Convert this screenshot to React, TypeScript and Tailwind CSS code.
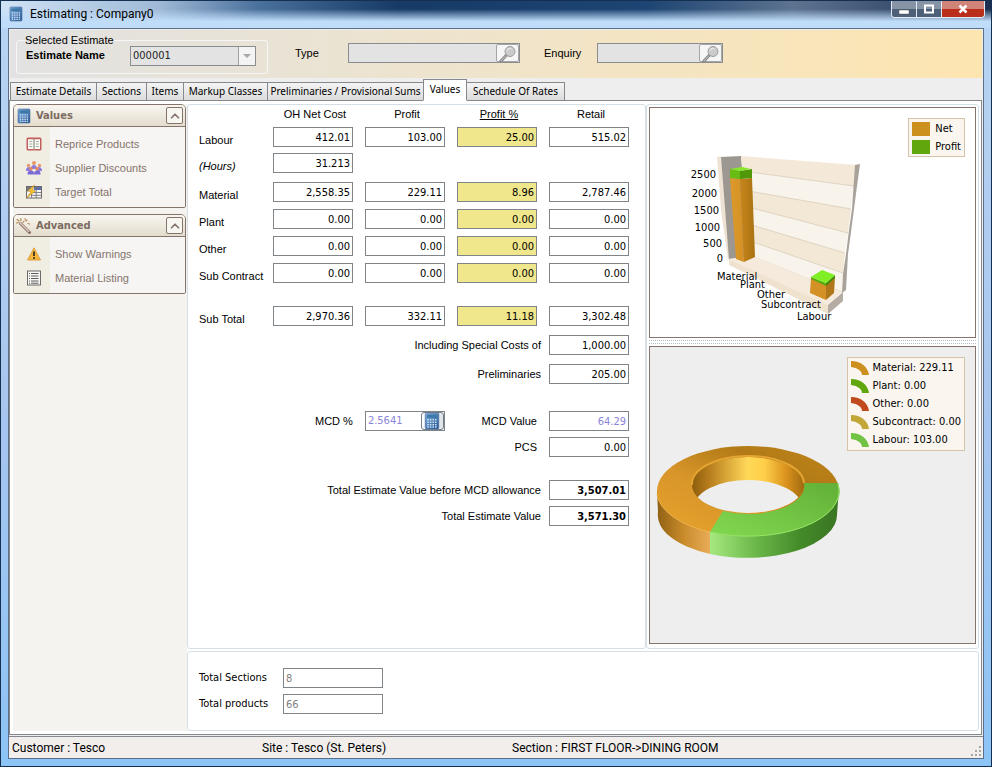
import React, { useState } from 'react';
import { ChevronUp } from 'lucide-react';

const UI_FONT = "font-['DejaVu_Sans_Condensed','Noto_Sans',sans-serif]";
const TAB_FONT = "font-['Noto_Sans',sans-serif]";
const FORM_FONT = "font-['Liberation_Sans',sans-serif]";
const TITLE_FONT = "font-['Roboto',sans-serif]";

interface ValueRow {
  label: string;
  height: string;
  italic?: boolean;
  cells: string[];
}

const COLUMNS = ['OH Net Cost', 'Profit', 'Profit %', 'Retail'];

const ROWS: ValueRow[] = [
  { label: 'Labour', height: 'h-[26px]', cells: ['412.01', '103.00', '25.00', '515.02'] },
  { label: '(Hours)', height: 'h-[29px]', italic: true, cells: ['31.213'] },
  { label: 'Material', height: 'h-[27px]', cells: ['2,558.35', '229.11', '8.96', '2,787.46'] },
  { label: 'Plant', height: 'h-[27px]', cells: ['0.00', '0.00', '0.00', '0.00'] },
  { label: 'Other', height: 'h-[27px]', cells: ['0.00', '0.00', '0.00', '0.00'] },
  { label: 'Sub Contract', height: 'h-[43px]', cells: ['0.00', '0.00', '0.00', '0.00'] },
  { label: 'Sub Total', height: 'h-[29px]', cells: ['2,970.36', '332.11', '11.18', '3,302.48'] },
];

const TABS = [
  { name: 'Estimate Details', width: 'w-[87px]' },
  { name: 'Sections', width: 'w-[51px]' },
  { name: 'Items', width: 'w-[38px]' },
  { name: 'Markup Classes', width: 'w-[85px]' },
  { name: 'Preliminaries / Provisional Sums', width: 'w-[157px]' },
  { name: 'Values', width: 'w-[44px]' },
  { name: 'Schedule Of Rates', width: 'w-[99px]' },
];

/* Icons */

const CalculatorIcon = ({ className = 'h-4 w-4' }: { className?: string }) => (
  <svg viewBox="0 0 16 16" className={className} aria-hidden="true">
    <defs>
      <linearGradient id="calc" x1="0" y1="0" x2="1" y2="1">
        <stop offset="0" stopColor="#7fb0e0" />
        <stop offset="1" stopColor="#23538f" />
      </linearGradient>
    </defs>
    <rect x="2" y="1" width="12" height="14" rx="1" fill="url(#calc)" stroke="#4a6f9f" strokeWidth="0.6" />
    <rect x="3.5" y="2.5" width="9" height="2.5" fill="#3d78a8" />
    <g fill="#d8ecff">
      {[6.3, 8.5, 10.7, 12.7].map((y) =>
        [3.8, 6.1, 8.4, 10.7].map((x) => <rect key={`${x}-${y}`} x={x} y={y} width="1.4" height="1.2" />)
      )}
    </g>
  </svg>
);

const BookIcon = () => (
  <svg viewBox="0 0 16 16" className="h-4 w-4" aria-hidden="true">
    <rect x="0.5" y="1.5" width="15" height="13" rx="1.5" fill="#c0605c" />
    <path d="M2 3.2h5.2l.8.6.8-.6H14v9.800H8.8l-.8.5-.8-.5H2z" fill="#fbfaf5" />
    <path d="M8 3.5v9.5" stroke="#777" strokeWidth="1" />
    <path d="M3.2 5.500h3M3.2 8h3M3.2 10.500h3M9.8 5.500h3M9.8 8h3M9.8 10.500h3" stroke="#9fae9d" strokeWidth="1" />
  </svg>
);

const PeopleIcon = () => (
  <svg viewBox="0 0 16 16" className="h-4 w-4" aria-hidden="true">
    <path d="M5 9c0-3 1-4 3-4s3 1 3 4z" fill="#8f7be0" />
    <circle cx="8" cy="3" r="2" fill="#e79a68" />
    <path d="M0 11c0-3 1-4 3-4s2.500 1 2.500 4z" fill="#8f7be0" />
    <path d="M10.500 11c0-3 1-4 2.500-4s3 1 3 4z" fill="#8f7be0" />
    <circle cx="2.500" cy="5.500" r="1.700" fill="#e79a68" />
    <circle cx="13.500" cy="5.500" r="1.700" fill="#e79a68" />
    <path d="M1.500 14.500c0-3 1-4 3.500-4s3 1 3 4z" fill="#7b6ad6" />
    <path d="M8 14.500c0-3 1-4 3.500-4s3 1 3 4z" fill="#7b6ad6" />
    <circle cx="5" cy="8.800" r="1.800" fill="#e58e58" />
    <circle cx="11" cy="8.800" r="1.800" fill="#e58e58" />
  </svg>
);

const TargetIcon = () => (
  <svg viewBox="0 0 16 16" className="h-4 w-4" aria-hidden="true">
    <rect x="0.500" y="2.500" width="15" height="11.500" fill="#f4f4ee" stroke="#6d6a68" />
    <rect x="8" y="3" width="7" height="3" fill="#5a6fa8" />
    <path d="M6 8.500h9M5 11.300h10M5.500 9v5M10.200 3v11" stroke="#6f7683" strokeWidth="0.900" />
    <path d="M1 3h5L1 8z" fill="#7b7873" />
    <path d="M8.500 1L2 7l3 .8L.5 14 9.500 7 6.500 6z" fill="#f8c22c" stroke="#b8801c" strokeWidth="0.500" />
  </svg>
);

const WandIcon = () => (
  <svg viewBox="0 0 16 16" className="h-4 w-4" aria-hidden="true">
    <path d="M4.500 5.500l9 9" stroke="#8b6f63" strokeWidth="3" strokeLinecap="round" />
    <path d="M4.200 5l8.500 8.500" stroke="#dfd0c5" strokeWidth="1.200" strokeLinecap="round" />
    <path d="M1 1.500l2 1.500M0.500 5l2-.5M5 0.500L4.800 3M8 3l-1 1.500M11 2l-1 1M12 5.500l1.500.5M9 .8l.5 1" stroke="#b5854e" strokeWidth="1.100" strokeLinecap="round" />
  </svg>
);

const WarningIcon = () => (
  <svg viewBox="0 0 16 16" className="h-4 w-4" aria-hidden="true">
    <path d="M8 1.800l6.500 12.200H1.500z" fill="#f6b53c" stroke="#dda046" strokeLinejoin="round" />
    <path d="M8 5.500v4.500M8 11.300v1.600" stroke="#3c2f1b" strokeWidth="1.800" />
  </svg>
);

const ListIcon = () => (
  <svg viewBox="0 0 16 16" className="h-4 w-4" aria-hidden="true">
    <rect x="1.500" y="1" width="13" height="14" fill="#f7f7f3" stroke="#6b6b6b" />
    <path d="M5 3.500h7.500M5 6h7.500M5 8.500h7.500M5 11h7.500M5 13.200h7.500" stroke="#5e5e5e" strokeWidth="1" />
    <path d="M3 3.500h1M3 6h1M3 8.500h1M3 11h1M3 13.200h1" stroke="#5e5e5e" strokeWidth="1" />
  </svg>
);

const LookupIcon = () => (
  <svg viewBox="0 0 22 18" className="h-[18px] w-[22px]" aria-hidden="true">
    <path d="M9.500 10L4 16" stroke="#8d8d8d" strokeWidth="3" strokeLinecap="round" />
    <path d="M9 10.500L4 16" stroke="#c4c4c4" strokeWidth="1" />
    <circle cx="13" cy="6.500" r="5" fill="#cbcbcb" stroke="#9b9b9b" />
    <path d="M10 5.500c.8-2 3-2.500 4.500-1.800" stroke="#e6e6e6" strokeWidth="1.200" fill="none" />
  </svg>
);

/* Form pieces */

interface ValueBoxProps {
  id?: string;
  label?: string;
  value: string;
  tone?: string;
}

const ValueBox: React.FC<ValueBoxProps> = ({ id, label, value, tone = 'bg-white text-black' }) => (
  <input
    id={id}
    aria-label={label}
    defaultValue={value}
    className={`block h-5 w-20 border border-[#7f8488] px-[2px] text-right text-[11px] leading-4 outline-none ${UI_FONT} ${tone}`}
  />
);

const LookupField = ({ id, label, width }: { id: string; label: string; width: string }) => (
  <div className="flex items-center">
    <label htmlFor={id} className="w-[53px]">{label}</label>
    <div className={`flex h-5 border border-[#8a8d90] bg-[#e3e3e3] ${width}`}>
      <input id={id} className="min-w-0 flex-1 bg-transparent px-1 outline-none" />
      <button aria-label={`Find ${label}`} className="h-[18px] w-[23px] rounded-[2px] border border-[#a5a5a5] bg-[#f6f6f6]">
        <LookupIcon />
      </button>
    </div>
  </div>
);

interface TotalLineProps {
  id: string;
  label: string;
  value: string;
  inset?: string;
  tone?: string;
}

const TotalLine: React.FC<TotalLineProps> = ({ id, label, value, inset = 'mr-2', tone }) => (
  <div className="flex items-center justify-end">
    <label htmlFor={id} className={inset}>{label}</label>
    <ValueBox id={id} value={value} tone={tone} />
  </div>
);

/* Side panel */

interface SideGroupProps {
  title: string;
  icon: React.ReactNode;
  items: { name: string; icon: React.ReactNode }[];
}

const SideGroup: React.FC<SideGroupProps> = ({ title, icon, items }) => {
  const [open, setOpen] = useState(true);

  return (
    <section className="overflow-hidden rounded-t-[5px] rounded-b-[2px] border border-[#85746b] bg-[#f6f5f3] text-[#85746b]">
      <header className="flex h-[22px] items-center border-b border-[#85746b] bg-linear-to-b from-[#f8f6f0] to-[#e3ddcd] pr-[2px] pl-[2px]">
        {icon}
        <h2 className={`flex-1 pt-px pl-1 text-[11px] font-bold text-[#7d6b60] ${UI_FONT}`}>{title}</h2>
        <button
          aria-label={`Toggle ${title}`}
          onClick={() => setOpen(!open)}
          className="flex h-[17px] w-[17px] items-center justify-center rounded-[2px] border border-[#85746b] bg-[#f8f6f1]"
        >
          <ChevronUp className="h-[14px] w-[14px] shrink-0" strokeWidth={3} />
        </button>
      </header>
      {open && (
        <ul className="bg-linear-to-r from-[#f0ede3] from-[36px] to-[#f6f5f3] to-[36px] pt-[5px] pb-[3px]">
          {items.map((item) => (
            <li key={item.name}>
              <button className="flex h-6 w-full items-center gap-[13px] pl-3 text-left text-[11px]">
                {item.icon}
                {item.name}
              </button>
            </li>
          ))}
        </ul>
      )}
    </section>
  );
};

/* Charts */

const AXIS_TICKS = [
  { text: '2500', x: 716, y: 178 },
  { text: '2000', x: 717, y: 197 },
  { text: '1500', x: 719, y: 214 },
  { text: '1000', x: 720, y: 231 },
  { text: '500', x: 722, y: 247 },
  { text: '0', x: 723, y: 262 },
];

const AXIS_NAMES = [
  { text: 'Material', x: 717, y: 280 },
  { text: 'Plant', x: 740, y: 288 },
  { text: 'Other', x: 757, y: 298 },
  { text: 'Subcontract', x: 761, y: 308 },
  { text: 'Labour', x: 797, y: 320 },
];

const BarChart = () => (
  <svg viewBox="650 109 220 226" className="h-[226px] w-[220px] shrink-0" role="img" aria-label="Net and profit by type">
    <defs>
      <linearGradient id="netFront" x1="0" y1="0" x2="1" y2="0">
        <stop offset="0" stopColor="#dc9a2c" />
        <stop offset="1" stopColor="#d49024" />
      </linearGradient>
      <linearGradient id="netSide" x1="0" y1="0" x2="1" y2="0">
        <stop offset="0" stopColor="#c8861c" />
        <stop offset="1" stopColor="#a87212" />
      </linearGradient>
    </defs>
    {/* walls */}
    <path d="M717 157l4-1 9 103-2 1-7-50z" fill="#eee3d2" />
    <path d="M721 157l20-1 12 100-24 3z" fill="#9d9791" />
    <path d="M741 156l116 9-3 21-112-15z" fill="#f4e9d8" />
    <path d="M742 171l112 15-3 23-108-19z" fill="#f8f4eb" />
    <path d="M743 190l108 19-3 24-104-27z" fill="#f3e8d6" />
    <path d="M744 206l104 27-3 20-100-30z" fill="#f8f4eb" />
    <path d="M745 223l100 30-2 20-96-33z" fill="#f3e8d6" />
    <path d="M747 240l96 33-1 20-93-38z" fill="#f8f4eb" />
    <path d="M742 171l112 15M743 190l108 19M744 206l104 27M745 223l100 30M747 240l96 33M754 257l50 20 38 15" stroke="#d8ccb9" fill="none" strokeWidth="0.800" />
    <path d="M855 165l5-1-3 22-3 23-3 23-3 22-2 36-4 3 1-19 3-20 3-24 3-21z" fill="#a9a29b" />
    {/* floor */}
    <path d="M729 259l26-2 87 35-14 13z" fill="#f5eadb" />
    <path d="M729 259l99 46v9l-99-49z" fill="#efe2cf" />
    <path d="M828 305l15-13v9l-15 13z" fill="#b5ada4" />
    {/* Material */}
    <path d="M730 178l10 1 4 83-8-3z" fill="url(#netFront)" />
    <path d="M740 179l12-1 3 79-11 5z" fill="url(#netSide)" />
    <path d="M730 169l10 2v8l-10-1z" fill="#68bc14" />
    <path d="M740 171l12-2v9l-12 1z" fill="#51970a" />
    <path d="M730 169l12-2 9 2-11 2z" fill="#86e82a" />
    {/* Labour */}
    <path d="M811 278l15 7v15l-16-7z" fill="#d49126" />
    <path d="M826 285l9-8-1 16-8 7z" fill="#b0771a" />
    <path d="M811 277l15 6v3l-15-7z" fill="#5aaa10" />
    <path d="M826 283l9-8v3l-9 8z" fill="#438806" />
    <path d="M811 277l11-7 13 5-9 8z" fill="#80ef24" />
    <g className={UI_FONT} fontSize="11" fill="#000">
      {AXIS_TICKS.map((t) => (
        <text key={t.text} x={t.x} y={t.y} textAnchor="end">{t.text}</text>
      ))}
      {AXIS_NAMES.map((t) => (
        <text key={t.text} x={t.x} y={t.y}>{t.text}</text>
      ))}
    </g>
  </svg>
);

const DonutChart = () => (
  <svg viewBox="655 442 186 120" className="mt-[89px] ml-1 h-[120px] w-[186px] shrink-0" role="img" aria-label="Profit by type">
    <defs>
      <linearGradient id="goldTop" x1="0" y1="1" x2="1" y2="0">
        <stop offset="0" stopColor="#e9a42c" />
        <stop offset="0.400" stopColor="#d8962a" />
        <stop offset="0.700" stopColor="#b27a16" />
        <stop offset="1" stopColor="#c0861c" />
      </linearGradient>
      <linearGradient id="goldWall" gradientUnits="userSpaceOnUse" x1="692" y1="0" x2="805" y2="0">
        <stop offset="0" stopColor="#8a5c0c" />
        <stop offset="0.150" stopColor="#b57a1c" />
        <stop offset="0.500" stopColor="#ffd858" />
        <stop offset="0.650" stopColor="#ffce48" />
        <stop offset="0.850" stopColor="#d8901c" />
        <stop offset="1" stopColor="#a06a10" />
      </linearGradient>
      <linearGradient id="goldRim" gradientUnits="userSpaceOnUse" x1="658" y1="0" x2="711" y2="0">
        <stop offset="0" stopColor="#8f6114" />
        <stop offset="0.500" stopColor="#c98b2a" />
        <stop offset="1" stopColor="#e8ac58" />
      </linearGradient>
      <linearGradient id="greenTop" x1="0" y1="1" x2="1" y2="0">
        <stop offset="0" stopColor="#82d850" />
        <stop offset="1" stopColor="#62b038" />
      </linearGradient>
      <linearGradient id="greenRim" gradientUnits="userSpaceOnUse" x1="711" y1="0" x2="840" y2="0">
        <stop offset="0" stopColor="#a6e880" />
        <stop offset="0.350" stopColor="#6cb84a" />
        <stop offset="0.700" stopColor="#438a28" />
        <stop offset="1" stopColor="#3a7424" />
      </linearGradient>
      <clipPath id="hole">
        <ellipse cx="749" cy="485" rx="56" ry="28" />
      </clipPath>
    </defs>
    <path d="M658 490L659 512A90 43 0 0 0 711 554L711 528Z" fill="url(#goldRim)" />
    <path d="M711 528L711 554A90 43 0 0 0 838 514L840 490Z" fill="url(#greenRim)" />
    <ellipse cx="749" cy="491" rx="91" ry="45" fill="url(#goldTop)" />
    <path d="M805 483H839A91 45 0 0 1 711 532L724 511A56 28 0 0 0 805 483Z" fill="url(#greenTop)" />
    <path d="M839 484A91 45 0 0 1 711 532" fill="none" stroke="#97e468" strokeWidth="1" />
    <path d="M658 494A91 45 0 0 0 711 532" fill="none" stroke="#efb44c" strokeWidth="1" />
    <ellipse cx="749" cy="485" rx="56" ry="28" fill="url(#goldWall)" />
    <g clipPath="url(#hole)">
      <ellipse cx="749" cy="507" rx="54" ry="27" fill="#eeeeee" />
    </g>
    <path d="M693 485A56 28 0 0 1 805 483" fill="none" stroke="#e3a432" strokeWidth="2" />
  </svg>
);

const PROFIT_KEYS = [
  { text: 'Material: 229.11', color: '#cc901e' },
  { text: 'Plant: 0.00', color: '#5fa70c' },
  { text: 'Other: 0.00', color: '#c04a1c' },
  { text: 'Subcontract: 0.00', color: '#c2a636' },
  { text: 'Labour: 103.00', color: '#72c344' },
];

const LEGEND = `ml-auto self-start border border-[#d4c3a8] bg-[#faf5ef] text-[11px] text-black whitespace-nowrap ${UI_FONT}`;

const App: React.FC = () => {
  const [activeTab, setActiveTab] = useState('Values');

  return (
    <div className={`flex min-h-screen flex-col border border-[#142f50] bg-linear-to-b from-[#b9d5f4] via-[#a9c6ee] to-[#8cc4f6] px-[7px] pb-[7px] text-[11px] text-black ${FORM_FONT}`}>
      {/* Title bar */}
      <header className="-mx-[7px] flex h-[27px] items-start bg-[linear-gradient(to_bottom,transparent_30%,#bfdcf9_75%),linear-gradient(to_right,#cfe2f5_0%,#9fb9d6_16%,#4a709c_26%,#173a66_40%,#1d4472_65%,#5d7390_80%,#1a2f50_100%)] pl-[7px]">
        <div className="flex h-[26px] items-center gap-[6px]">
          <CalculatorIcon />
          <h1 className={`text-[12px] ${TITLE_FONT}`}>Estimating : Company0</h1>
        </div>
        <div className="mr-[6px] ml-auto flex h-[17px] overflow-hidden rounded-b-[4px] border border-t-0 border-[#e2ebf5]">
          <button aria-label="Minimize" className="flex w-[25px] items-center justify-center border-r border-[#e2ebf5] bg-linear-to-b from-[#8794a6] from-50% to-[#4d6078] to-50%">
            <svg viewBox="0 0 12 10" className="mt-1 h-[10px] w-3"><rect x="1" y="4" width="10" height="4" fill="#fff" stroke="#555" strokeWidth="0.500" /></svg>
          </button>
          <button aria-label="Maximize" className="flex w-[25px] items-center justify-center border-r border-[#e2ebf5] bg-linear-to-b from-[#8794a6] from-50% to-[#4d6078] to-50%">
            <svg viewBox="0 0 12 10" className="h-[10px] w-3"><rect x="2" y="1.500" width="8" height="7" fill="none" stroke="#fff" strokeWidth="2" /></svg>
          </button>
          <button aria-label="Close" className="flex w-[42px] items-center justify-center bg-linear-to-b from-[#d18478] from-50% to-[#b92f1b] to-50%">
            <svg viewBox="0 0 12 10" className="h-[10px] w-3"><path d="M2.500 1.500l7 7M9.500 1.500l-7 7" stroke="#fff" strokeWidth="2.500" /></svg>
          </button>
        </div>
      </header>

      <main className="flex flex-1 flex-col border border-[#5c6f86] bg-[#eeeeee]">
        {/* Estimate selection */}
        <div className="mx-px mt-px flex h-12 items-start bg-linear-to-r from-[#e2e2e2] to-[#fde5b0]">
          <fieldset className="mt-1 ml-[6px] flex h-10 w-[252px] items-start rounded-[3px] border border-[#f6f6f6] pl-2">
            <legend className="px-0 leading-3">Selected Estimate</legend>
            <label htmlFor="estimate" className="w-[105px] pt-px pl-px font-bold">Estimate Name</label>
            <div className="flex h-5 w-[126px] border border-[#8a8d90] bg-[#e3e3e3]">
              <select id="estimate" className={`flex-1 appearance-none bg-transparent px-[2px] text-[11px] text-[#222] ${UI_FONT}`}>
                <option>000001</option>
              </select>
              <span className="flex w-[17px] items-center justify-center border-l border-[#a0a0a0] bg-[#f4f4f4]">
                <svg viewBox="0 0 8 4" className="h-1 w-2"><path d="M0 0h8L4 4z" fill="#a8a8a8" /></svg>
              </span>
            </div>
          </fieldset>
          <div className="mt-[13px] ml-[27px] flex items-center gap-6">
            <LookupField id="type" label="Type" width="w-[172px]" />
            <LookupField id="enquiry" label="Enquiry" width="w-[126px]" />
          </div>
        </div>

        {/* Tabs */}
        <div role="tablist" className={`flex h-[22px] items-end pl-px text-[10px] ${TAB_FONT}`}>
          {TABS.map((tab) => (
            <button
              key={tab.name}
              role="tab"
              aria-selected={tab.name === activeTab}
              onClick={() => setActiveTab(tab.name)}
              className={`-mr-px shrink-0 border border-[#85898d] text-center whitespace-nowrap ${tab.width} ${
                tab.name === activeTab
                  ? 'z-10 -mb-px h-[22px] border-b-white bg-white pb-[2px]'
                  : 'h-[18px] border-b-0 bg-linear-to-b from-[#f4f4f4] to-[#dcdcdc]'
              }`}
            >
              {tab.name}
            </button>
          ))}
        </div>

        <div className="mr-px flex flex-1 border border-[#85898d] bg-white py-[3px] pr-[2px] pl-[3px]">
          {/* Side menu */}
          <nav className="flex w-[174px] shrink-0 flex-col gap-[6px] bg-[#f4f3f0] pr-px">
            <SideGroup
              title="Values"
              icon={<CalculatorIcon />}
              items={[
                { name: 'Reprice Products', icon: <BookIcon /> },
                { name: 'Supplier Discounts', icon: <PeopleIcon /> },
                { name: 'Target Total', icon: <TargetIcon /> },
              ]}
            />
            <SideGroup
              title="Advanced"
              icon={<WandIcon />}
              items={[
                { name: 'Show Warnings', icon: <WarningIcon /> },
                { name: 'Material Listing', icon: <ListIcon /> },
              ]}
            />
          </nav>

          <div className="flex min-w-0 flex-1 flex-col gap-[2px]">
            <div className="flex flex-1">
              {/* Values form */}
              <section className="w-[459px] shrink-0 rounded-[3px] border border-[#d5dfe6] pt-px pr-4 pl-[11px]">
                <table className="w-[430px] table-fixed border-collapse">
                  <thead>
                    <tr className="h-[21px]">
                      <th className="w-[74px]" />
                      {COLUMNS.map((name, i) => (
                        <th key={name} className={`pl-1 align-top font-normal ${i < 3 ? 'w-[92px] pr-3' : 'w-20'} ${i === 2 ? 'underline' : ''}`}>
                          {name}
                        </th>
                      ))}
                    </tr>
                  </thead>
                  <tbody>
                    {ROWS.map((row) => (
                      <tr key={row.label} className={row.height}>
                        <th className={`pt-[5px] text-left align-top font-normal whitespace-nowrap ${row.italic ? 'italic' : ''}`}>{row.label}</th>
                        {row.cells.map((value, i) => (
                          <td key={COLUMNS[i]} className="p-0 align-top">
                            <ValueBox
                              label={`${row.label} ${COLUMNS[i]}`}
                              value={value}
                              tone={i === 2 ? 'bg-[#f0e68c] text-black' : undefined}
                            />
                          </td>
                        ))}
                      </tr>
                    ))}
                  </tbody>
                </table>

                <div className="flex flex-col gap-[9px]">
                  <TotalLine id="special" label="Including Special Costs of" value="1,000.00" />
                  <TotalLine id="prelims" label="Preliminaries" value="205.00" />
                </div>
                <div className="mt-[27px] flex flex-col gap-[6px]">
                  <div className="flex items-center justify-between pl-[116px]">
                    <div className="flex items-center">
                      <label htmlFor="mcd" className="mr-3">MCD %</label>
                      <div className="flex h-5 w-20 border border-[#7f8488]">
                        <input id="mcd" defaultValue="2.5641" className={`min-w-0 flex-1 px-[2px] text-[11px] text-[#8a84d8] outline-none ${UI_FONT}`} />
                        <button aria-label="Calculate MCD" className="flex h-[18px] w-[23px] items-center justify-center rounded-[3px] border border-[#74808c] bg-linear-to-r from-white to-[#dfe3e8]">
                          <CalculatorIcon className="h-[18px] w-[18px]" />
                        </button>
                      </div>
                    </div>
                    <TotalLine id="mcdValue" label="MCD Value" value="64.29" inset="mr-3" tone="bg-white text-[#8a84d8]" />
                  </div>
                  <TotalLine id="pcs" label="PCS" value="0.00" inset="mr-3" />
                </div>
                <div className="mt-[23px] flex flex-col gap-[6px]">
                  <TotalLine id="before" label="Total Estimate Value before MCD allowance" value="3,507.01" tone="bg-white font-bold" />
                  <TotalLine id="total" label="Total Estimate Value" value="3,571.30" tone="bg-white font-bold" />
                </div>
              </section>

              {/* Charts */}
              <aside className="flex min-w-0 flex-1 flex-col gap-[2px] rounded-[3px] border border-[#d5dfe6] px-[2px] pt-[2px] pb-1">
                <div className="flex h-[231px] border border-[#85746b] bg-white pt-px pr-[10px]">
                  <BarChart />
                  <ul className={`mt-[9px] px-[3px] pt-px ${LEGEND}`}>
                    <li className="flex h-[18px] items-center gap-[5px]"><i className="h-[14px] w-[18px] bg-[#cc901e]" />Net</li>
                    <li className="flex h-[18px] items-center gap-[5px]"><i className="h-[14px] w-[18px] bg-[#5fa70c]" />Profit</li>
                  </ul>
                </div>
                <div className="h-1 border-y border-dotted border-[#b4bcc4]" />
                <div className="flex flex-1 border border-[#85746b] bg-[#eeeeee] pt-[6px] pr-[10px]">
                  <DonutChart />
                  <ul className={`mt-1 px-[3px] pt-px pb-px ${LEGEND}`}>
                    {PROFIT_KEYS.map((k) => (
                      <li key={k.text} className="flex h-[18px] items-center gap-1">
                        <svg viewBox="0 0 18 14" className="h-[14px] w-[18px]" aria-hidden="true">
                          <path d="M0 0C10 0 17 6 18 14H11C11 10 7 7 0 6Z" fill={k.color} />
                        </svg>
                        {k.text}
                      </li>
                    ))}
                  </ul>
                </div>
              </aside>
            </div>

            {/* Counters */}
            <section className={`flex h-[80px] flex-col gap-[6px] rounded-[3px] border border-[#d5dfe6] pt-4 pl-[11px] ${UI_FONT}`}>
              <div className="flex items-center">
                <label htmlFor="sections" className="w-[84px]">Total Sections</label>
                <input id="sections" defaultValue="8" className="h-5 w-[100px] border border-[#7f8488] px-[2px] text-[#808080]" />
              </div>
              <div className="flex items-center">
                <label htmlFor="products" className="w-[84px]">Total products</label>
                <input id="products" defaultValue="66" className="h-5 w-[100px] border border-[#7f8488] px-[2px] text-[#808080]" />
              </div>
            </section>
          </div>
        </div>

        {/* Status bar */}
        <footer className={`mt-px grid h-[22px] grid-cols-[250px_250px_1fr_auto] items-center border-t border-[#85898d] bg-[#f1eeec] pl-[3px] text-[12px] ${TITLE_FONT}`}>
          <span>Customer : Tesco</span>
          <span>Site : Tesco (St. Peters)</span>
          <span>Section : FIRST FLOOR-&gt;DINING ROOM</span>
          <svg viewBox="0 0 12 12" className="h-3 w-3 self-end" fill="#a9a5a2" aria-hidden="true">
            <path d="M8 0h2v2H8zM4 4h2v2H4zM8 4h2v2H8zM0 8h2v2H0zM4 8h2v2H4zM8 8h2v2H8z" />
          </svg>
        </footer>
      </main>
    </div>
  );
};

export default App;
